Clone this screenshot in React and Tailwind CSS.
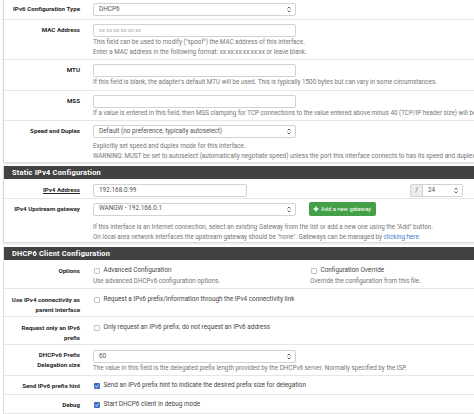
import React from 'react';

const Arrows = () => (
  <svg width="4" height="7" viewBox="0 0 4 7" className="shrink-0">
    <path d="M0.5 2.6 L2 1 L3.5 2.6" fill="none" stroke="#555" strokeWidth="0.9" />
    <path d="M0.5 4.4 L2 6 L3.5 4.4" fill="none" stroke="#555" strokeWidth="0.9" />
  </svg>
);

const Select = ({ value, width = 'w-[203px]' }) => (
  <div className={`${width} h-[13px] shrink-0 flex items-center justify-between border border-[#d2d2d2] rounded-[2px] bg-white pl-[5px] pr-[4px] text-[6.4px] text-[#555]`}>
    <span className="whitespace-nowrap">{value}</span>
    <Arrows />
  </div>
);

const Input = ({ value, placeholder, width = 'w-[203px]' }) => (
  <div className={`${width} h-[13px] shrink-0 flex items-center border border-[#d2d2d2] rounded-[2px] bg-white pl-[5px] text-[6.4px]`}>
    {value ? (
      <span className="text-[#555]">{value}</span>
    ) : (
      <span className="text-[#a8a8a8] text-[5.6px] tracking-[0.02em]">{placeholder}</span>
    )}
  </div>
);

const Help = ({ children, className = '' }) => (
  <div className={`text-[6.3px] text-[#757575] whitespace-nowrap leading-[9.5px] ${className}`}>{children}</div>
);

const Label = ({ children, className = '' }) => (
  <div className={`w-[76px] shrink-0 text-right font-bold text-[6.2px] text-[#262626] ${className}`}>{children}</div>
);

const Check = ({ checked }) =>
  checked ? (
    <span className="block w-[6px] h-[6px] rounded-[1px] bg-[#3b6fc4]">
      <svg width="6" height="6" viewBox="0 0 6 6" className="block">
        <path d="M1.3 3.1 L2.5 4.2 L4.7 1.7" fill="none" stroke="white" strokeWidth="0.9" />
      </svg>
    </span>
  ) : (
    <span className="block w-[6px] h-[6px] rounded-[1px] border border-[#c4c4c4] bg-white" />
  );

const CheckLine = ({ checked, text, className = '' }) => (
  <div className={`flex items-center text-[6.4px] text-[#444] whitespace-nowrap ${className}`}>
    <span className="block ml-[1px] mr-[3.5px] shrink-0">
      <Check checked={checked} />
    </span>
    <span>{text}</span>
  </div>
);

const Header = ({ title }) => (
  <div className="h-[13px] bg-[#424242] flex items-center pl-[8px] text-white font-bold text-[7.4px] tracking-[0.03em] whitespace-nowrap">
    {title}
  </div>
);

const Row = ({ children, className = '', last }) => (
  <div className={`flex ${last ? '' : 'border-b border-[#e6e6e6]'} ${className}`}>{children}</div>
);

const Content = ({ children, className = '' }) => (
  <div className={`ml-[13px] flex-1 min-w-0 ${className}`}>{children}</div>
);

export default function App() {
  return (
    <div className="w-[474px] h-[414px] overflow-hidden bg-white font-['Roboto','Liberation_Sans',sans-serif]">
      {/* interface settings */}
      <div className="ml-[3px] w-[490px] border-l border-b border-[#dcdcdc] bg-white shadow-[0_1px_2px_rgba(0,0,0,0.12)]">
        <Row className="pt-[3px] pb-[3px]">
          <Label className="leading-[13px]">IPv6 Configuration Type</Label>
          <Content>
            <Select value="DHCP6" />
          </Content>
        </Row>
        <Row className="pt-[4px] pb-[2px]">
          <Label className="leading-[13px]">MAC Address</Label>
          <Content>
            <Input placeholder="xx:xx:xx:xx:xx:xx" />
            <Help className="mt-[1px]">
              This field can be used to modify ("spoof") the MAC address of this interface.
              <br />
              Enter a MAC address in the following format: xx:xx:xx:xx:xx:xx or leave blank.
            </Help>
          </Content>
        </Row>
        <Row className="pt-[4px] pb-[2px]">
          <Label className="leading-[13px]">MTU</Label>
          <Content>
            <Input />
            <Help className="mt-[1px]">
              If this field is blank, the adapter's default MTU will be used. This is typically 1500 bytes but can vary in some circumstances.
            </Help>
          </Content>
        </Row>
        <Row className="pt-[4px] pb-[2px]">
          <Label className="leading-[13px]">MSS</Label>
          <Content>
            <Input />
            <Help className="mt-[1px]">
              If a value is entered in this field, then MSS clamping for TCP connections to the value entered above minus 40 (TCP/IP header size) will be in effect.
            </Help>
          </Content>
        </Row>
        <Row className="pt-[4px] pb-[1px]" last>
          <Label className="leading-[13px]">Speed and Duplex</Label>
          <Content>
            <Select value="Default (no preference, typically autoselect)" />
            <Help className="mt-[3px] leading-[10px]">
              Explicitly set speed and duplex mode for this interface.
              <br />
              WARNING: MUST be set to autoselect (automatically negotiate speed) unless the port this interface connects to has its speed and duplex setting hard-coded.
            </Help>
          </Content>
        </Row>
      </div>

      {/* static ipv4 */}
      <div className="mt-[3px] ml-[3px] w-[490px] border-l border-b border-[#dcdcdc] bg-white shadow-[0_1px_2px_rgba(0,0,0,0.12)]">
        <Header title="Static IPv4 Configuration" />
        <Row className="pt-[5px] pb-[1px]">
          <Label className="leading-[13px] underline decoration-[0.6px] underline-offset-[1px]">IPv4 Address</Label>
          <Content className="flex items-center">
            <Input value="192.168.0.99" width="w-[154px]" />
            <div className="ml-[163px] w-[13px] h-[13px] flex items-center justify-center bg-[#ececec] border border-[#d2d2d2] rounded-l-[2px] text-[6.4px] text-[#555]">
              /
            </div>
            <div className="w-[40px] h-[13px] flex items-center justify-between border border-l-0 border-[#d2d2d2] rounded-r-[2px] bg-white pl-[5px] pr-[4px] text-[6.4px] text-[#555]">
              <span>24</span>
              <Arrows />
            </div>
          </Content>
        </Row>
        <Row className="pt-[3px]" last>
          <Label className="leading-[14px]">IPv4 Upstream gateway</Label>
          <Content>
            <div className="flex items-center h-[14px]">
              <Select value="WANGW - 192.168.0.1" />
              <div className="ml-[13px] w-[67px] h-[14px] flex items-center gap-[2px] pl-[4px] bg-[#43a047] rounded-[2px] text-white text-[5.8px] whitespace-nowrap overflow-hidden">
                <svg width="6" height="6" viewBox="0 0 6 6" className="shrink-0">
                  <path d="M3 0.5 V5.5 M0.5 3 H5.5" stroke="white" strokeWidth="1.5" />
                </svg>
                <span>Add a new gateway</span>
              </div>
            </div>
            <Help className="mt-[6px] leading-[10px]">
              If this interface is an Internet connection, select an existing Gateway from the list or add a new one using the "Add" button.
              <br />
              On local area network interfaces the upstream gateway should be "none". Gateways can be managed by{' '}
              <span className="text-[#3a7bc8]">clicking here</span>.
            </Help>
          </Content>
        </Row>
      </div>

      {/* dhcp6 client */}
      <div className="mt-[4px] ml-[3px] w-[490px] border-l border-[#dcdcdc] bg-white">
        <Header title="DHCP6 Client Configuration" />
        <Row className="pt-[5px] pb-[1.5px]">
          <Label className="leading-[12px]">Options</Label>
          <Content className="flex">
            <div className="w-[217px] shrink-0">
              <CheckLine text="Advanced Configuration" className="h-[12px]" />
              <Help>Use advanced DHCPv6 configuration options.</Help>
            </div>
            <div>
              <CheckLine text="Configuration Override" className="h-[12px]" />
              <Help>Override the configuration from this file.</Help>
            </div>
          </Content>
        </Row>
        <Row className="pt-[6px] pb-[1px]">
          <Label className="leading-[10px]">
            Use IPv4 connectivity as
            <br />
            parent interface
          </Label>
          <Content>
            <CheckLine text="Request a IPv6 prefix/information through the IPv4 connectivity link" className="h-[10px]" />
          </Content>
        </Row>
        <Row className="pt-[6px] pb-[1px]">
          <Label className="leading-[10px]">
            Request only an IPv6
            <br />
            prefix
          </Label>
          <Content>
            <CheckLine text="Only request an IPv6 prefix, do not request an IPv6 address" className="h-[10px]" />
          </Content>
        </Row>
        <Row className="pt-[5px] pb-[1px]">
          <Label className="leading-[10px]">
            DHCPv6 Prefix
            <br />
            Delegation size
          </Label>
          <Content>
            <Select value="60" />
            <Help className="mt-[1px]">
              The value in this field is the delegated prefix length provided by the DHCPv6 server. Normally specified by the ISP.
            </Help>
          </Content>
        </Row>
        <Row className="pt-[5px] pb-[3px]">
          <Label className="leading-[10px]">Send IPv6 prefix hint</Label>
          <Content>
            <CheckLine checked text="Send an IPv6 prefix hint to indicate the desired prefix size for delegation" className="h-[10px]" />
          </Content>
        </Row>
        <Row className="pt-[5px] pb-[3px]">
          <Label className="leading-[10px]">Debug</Label>
          <Content>
            <CheckLine checked text="Start DHCP6 client in debug mode" className="h-[10px]" />
          </Content>
        </Row>
      </div>
    </div>
  );
}
